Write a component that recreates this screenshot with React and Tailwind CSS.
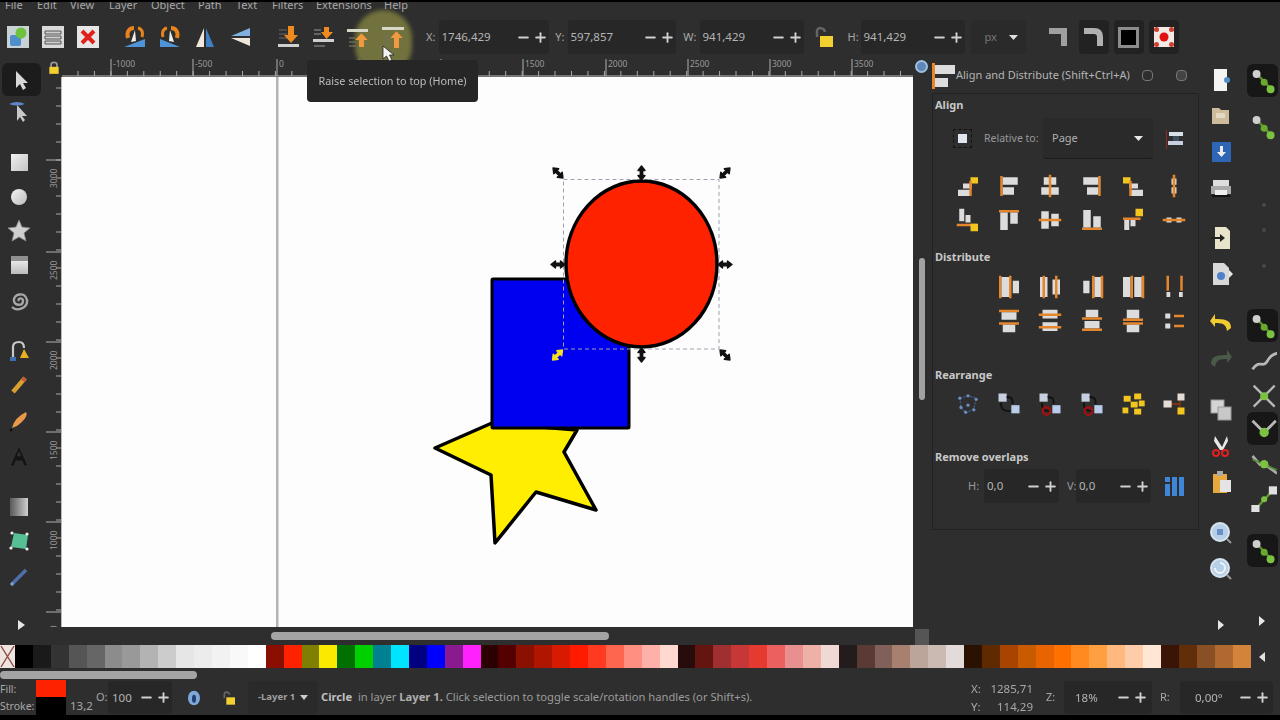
import React from 'react';
import { Minus, Plus } from 'lucide-react';

const O = '#e5862d';
const W = '#dcdcdc';
const Y = '#f2c61f';
const G = '#7cc242';

const menus = [['File', 32], ['Edit', 33], ['View', 39], ['Layer', 42], ['Object', 47], ['Path', 38], ['Text', 36], ['Filters', 44], ['Extensions', 68], ['Help', 40]];

const palette = [
  '#000000', '#1a1a1a', '#333333', '#555555', '#666666', '#8c8c8c', '#999999', '#b3b3b3', '#cccccc', '#e6e6e6', '#ececec', '#f2f2f2', '#f9f9f9', '#ffffff',
  '#8a0f00', '#ff2200', '#808000', '#fbe900', '#007000', '#00d000', '#008090', '#00e5ff', '#000080', '#0000ff', '#8a1a90', '#ff22ff',
  '#2b0000', '#550000', '#8a1000', '#b01500', '#d81a00', '#ff1a00', '#ff3a20', '#ff6650', '#ff8f80', '#ffb0a8', '#ffd8d0',
  '#280b0b', '#651510', '#a03030', '#c83737', '#e6392f', '#ec6060', '#e89090', '#efb0a8', '#f0d8d4',
  '#241c1c', '#5a3a35', '#806058', '#a88070', '#bba59a', '#cbbab2', '#e3dbdb',
  '#2b1100', '#602a00', '#a84400', '#c85a00', '#e86400', '#ff7000', '#ff8a20', '#ffa040', '#ffb880', '#ffccaa', '#ffe6d5',
  '#3a1505', '#602f0a', '#8a5025', '#b06a30', '#d4833a',
];

// icon made of plain blocks, each [x, y, w, h, colour]
function Blocks({ items, s = 24 }) {
  return (
    <svg width={s} height={s} viewBox="0 0 24 24" className="shrink-0">
      {items.map((r, i) => (
        <rect key={i} x={r[0]} y={r[1]} width={r[2]} height={r[3]} fill={r[4]} />
      ))}
    </svg>
  );
}

function Ico({ children, s = 24 }) {
  return (
    <svg width={s} height={s} viewBox="0 0 24 24" className="shrink-0">
      {children}
    </svg>
  );
}

const alignIcons = [
  [[14, 5, 6, 5, Y], [8, 10, 7, 4, W], [4, 15, 10, 5, W], [13, 8, 2, 12, O]],
  [[5, 4, 2, 16, O], [7, 5, 12, 6, W], [7, 13, 9, 6, W]],
  [[7, 5, 10, 6, W], [5, 13, 14, 6, W], [11, 3, 2, 18, O]],
  [[17, 4, 2, 16, O], [5, 5, 12, 6, W], [8, 13, 9, 6, W]],
  [[4, 5, 6, 5, Y], [9, 10, 7, 4, W], [10, 15, 10, 5, W], [9, 8, 2, 12, O]],
  [[10, 6, 4, 5, W], [10, 13, 4, 5, W], [11, 3, 2, 18, O]],
  [[5, 3, 4, 10, W], [10, 8, 4, 6, W], [3, 15, 16, 2, O], [14, 15, 6, 6, Y]],
  [[4, 4, 16, 2, O], [5, 6, 6, 14, W], [13, 6, 6, 9, W]],
  [[5, 5, 6, 14, W], [13, 7, 6, 10, W], [3, 11, 18, 2, O]],
  [[4, 18, 16, 2, O], [5, 4, 6, 14, W], [13, 9, 6, 9, W]],
  [[14, 3, 6, 6, Y], [4, 10, 14, 2, O], [5, 12, 4, 8, W], [10, 12, 4, 5, W]],
  [[6, 10, 4, 4, W], [14, 10, 4, 4, W], [3, 11, 18, 2, O]],
];

const distIcons = [
  [[4, 3, 2, 18, O], [6, 4, 6, 16, W], [12, 3, 2, 18, O], [15, 7, 5, 10, W]],
  [[4, 4, 6, 16, W], [14, 6, 6, 12, W], [6, 3, 2, 18, O], [16, 3, 2, 18, O]],
  [[5, 7, 5, 10, W], [12, 3, 2, 18, O], [14, 4, 6, 16, W], [19, 3, 2, 18, O]],
  [[4, 4, 6, 16, W], [10, 3, 2, 18, O], [13, 4, 6, 16, W], [19, 3, 2, 18, O]],
  [[6, 3, 2, 12, O], [6, 16, 3, 4, W], [17, 3, 2, 12, O], [16, 16, 3, 4, W]],
  [[4, 3, 16, 2, O], [6, 5, 12, 6, W], [4, 13, 16, 2, O], [7, 15, 10, 6, W]],
  [[6, 3, 12, 7, W], [3, 6, 18, 2, O], [6, 13, 12, 7, W], [3, 16, 18, 2, O]],
  [[7, 3, 10, 6, W], [4, 9, 16, 2, O], [6, 12, 12, 6, W], [4, 18, 16, 2, O]],
  [[7, 3, 10, 7, W], [4, 10, 16, 2, O], [4, 13, 16, 2, O], [7, 15, 10, 6, W]],
  [[5, 6, 4, 4, W], [12, 7, 8, 2, O], [5, 14, 4, 4, W], [12, 15, 8, 2, O]],
];

function SwapIcon({ red }) {
  return (
    <Ico s={28}>
      <rect x="3" y="3" width="7" height="7" fill="#c6d0e0" />
      <rect x="14" y="13" width="7" height="7" fill="#b9cdea" />
      <path d="M10 6 C16 6 15 10 15 12 M5 11 C5 18 9 18 13 18" stroke="#111" strokeWidth="1.6" fill="none" />
      {red && <circle cx="9" cy="18" r="3.2" fill="none" stroke="#a01010" strokeWidth="2" />}
    </Ico>
  );
}

const rearrangeIcons = [
  <Ico key="a" s={28}>
    <path d="M5 7 L12 5 L19 7 L17 16 L10 20 L6 15 Z" fill="none" stroke="#3f5f8f" strokeWidth="1" strokeDasharray="2 1" />
    {[[5, 7], [12, 5], [19, 8], [17, 17], [10, 19], [6, 15], [12, 13]].map((p, i) => (
      <circle key={i} cx={p[0]} cy={p[1]} r="1.4" fill="#6c8cc0" />
    ))}
  </Ico>,
  <SwapIcon key="b" />,
  <SwapIcon key="c" red />,
  <SwapIcon key="d" red />,
  <Blocks key="e" s={28} items={[[4, 5, 6, 5, Y], [13, 3, 6, 5, Y], [10, 10, 6, 5, Y], [17, 9, 5, 5, Y], [3, 15, 5, 5, Y], [13, 16, 6, 5, Y]]} />,
  <Ico key="f" s={28}>
    <path d="M8 12 H17 M17 6 V18" stroke="#7a3410" strokeWidth="1.6" />
    <rect x="3" y="9" width="7" height="6" fill="#e6dcd6" />
    <rect x="15" y="3" width="6" height="6" fill="#e6dcd6" />
    <rect x="15" y="15" width="6" height="6" fill={Y} />
  </Ico>,
];

function SnapDots() {
  return (
    <Ico s={28}>
      <path d="M6 5 L19 19" stroke="#5f8a2c" strokeWidth="2" />
      <circle cx="6.5" cy="6" r="3.4" fill="#cfcfcf" />
      <circle cx="13" cy="13" r="3" fill="#6aa92f" />
      <circle cx="18.5" cy="19" r="3.4" fill={G} />
    </Ico>
  );
}

const snapOther = {
  curve: (
    <Ico s={28}>
      <path d="M3 20 C9 11 12 19 15 14 S20 7 25 6" fill="none" stroke="#b8b8b8" strokeWidth="2.4" />
    </Ico>
  ),
  cross: (
    <Ico s={28}>
      <path d="M4 4 L22 22 M22 4 L4 22" stroke="#b8b8b8" strokeWidth="2" />
      <circle cx="13" cy="13" r="3.4" fill={G} />
    </Ico>
  ),
  vee: (
    <Ico s={28}>
      <path d="M3 5 L13 15 L23 5" stroke="#b8b8b8" strokeWidth="2.4" fill="none" />
      <circle cx="13" cy="15" r="4" fill={G} />
    </Ico>
  ),
  mid: (
    <Ico s={28}>
      <path d="M3 6 L10 14 M15 14 L24 21" stroke="#aaa" strokeWidth="2.4" />
      <path d="M3 9 L24 18" stroke="#4f8a2c" strokeWidth="1.5" />
      <circle cx="13" cy="13" r="3.6" fill={G} />
    </Ico>
  ),
  nodes: (
    <Ico s={28}>
      <path d="M6 21 L20 6" stroke="#5f9a2c" strokeWidth="2" />
      <rect x="2" y="18" width="7" height="7" fill="#e0e0e0" />
      <rect x="17" y="2" width="7" height="7" fill="#e0e0e0" />
      <circle cx="13" cy="13" r="2.6" fill={G} />
    </Ico>
  ),
};

const topIcons = {
  group: (
    <Ico>
      <rect x="1" y="1" width="22" height="22" fill="#c9d2d4" />
      <rect x="4" y="10" width="11" height="11" rx="2" fill="#4f90cc" />
      <circle cx="15" cy="8" r="5.5" fill="#6fc23e" />
    </Ico>
  ),
  layers: (
    <Ico>
      <rect x="1" y="1" width="22" height="22" fill="#dadada" />
      <path d="M4 6 H20 V9 H4 Z M4 11 H20 V14 H4 Z M4 16 H20 V19 H4 Z" fill="#cfcfcf" stroke="#555" strokeWidth="1" />
    </Ico>
  ),
  remove: (
    <Ico>
      <rect x="1" y="1" width="22" height="22" fill="#e6e6e6" />
      <path d="M6 6 L18 18 M18 6 L6 18" stroke="#e0201a" strokeWidth="4" />
    </Ico>
  ),
  rotL: (
    <Ico>
      <path d="M1 22 L22 14 L22 22 Z" fill="#4f93d8" />
      <path d="M12 5 L13 16 L8 17 Z" fill="#eee" />
      <path d="M5 13 C3 6 7 3 11 3" stroke="#e8841e" strokeWidth="4" fill="none" />
      <path d="M15 3 C20 4 20 9 19 12" stroke="#e8841e" strokeWidth="3" fill="none" />
    </Ico>
  ),
  rotR: (
    <Ico>
      <path d="M2 14 L22 22 L2 22 Z" fill="#4f93d8" />
      <path d="M12 5 L11 16 L16 17 Z" fill="#eee" />
      <path d="M19 13 C21 6 17 3 13 3" stroke="#e8841e" strokeWidth="4" fill="none" />
      <path d="M9 3 C4 4 4 9 5 12" stroke="#e8841e" strokeWidth="3" fill="none" />
    </Ico>
  ),
  flipH: (
    <Ico>
      <path d="M11 3 L11 22 L3 22 Z" fill="#f0e8df" />
      <path d="M13 3 L13 22 L21 22 Z" fill="#3f7fc4" />
    </Ico>
  ),
  flipV: (
    <Ico>
      <path d="M3 11 L22 11 L22 3 Z" fill="#7fb0e0" />
      <path d="M3 13 L22 13 L22 21 Z" fill="#efe6da" />
    </Ico>
  ),
  lowerBottom: (
    <Ico>
      <path d="M3 5 H11 M3 9 H11 M3 13 H11" stroke="#555" strokeWidth="1.5" />
      <rect x="2" y="19" width="21" height="3" fill="#cfcfcf" />
      <path d="M12 1 H18 V10 H22 L15 18 L8 10 H12 Z" fill="#ee8a20" />
    </Ico>
  ),
  lower: (
    <Ico>
      <path d="M3 5 H10 M3 9 H10 M3 21 H14" stroke="#777" strokeWidth="1.5" />
      <rect x="2" y="14" width="21" height="3" fill="#cfcfcf" />
      <path d="M13 2 H18 V7 H22 L15.5 14 L10 7 H13 Z" fill="#ee8a20" />
    </Ico>
  ),
  raise: (
    <Ico>
      <rect x="1" y="4" width="21" height="3" fill="#d8d8c8" />
      <path d="M3 13 H10 M3 17 H10 M3 21 H10" stroke="#6a6a5a" strokeWidth="1.5" />
      <path d="M13 22 H18 V15 H22 L15.5 8 L9 15 H13 Z" fill="#ee9a20" />
    </Ico>
  ),
  top: (
    <Ico>
      <rect x="1" y="2" width="22" height="3" fill="#d8d8c8" />
      <path d="M3 11 H9 M3 15 H9 M3 19 H9" stroke="#6a6a5a" strokeWidth="1.5" />
      <path d="M13 23 H18 V13 H22 L15.5 6 L9 13 H13 Z" fill="#ee9a20" />
    </Ico>
  ),
};

const Lock = ({ s = 24 }) => (
  <Ico s={s}>
    <path d="M5 12 V6 C5 2 12 2 13 7" stroke="#666" strokeWidth="2.5" fill="none" />
    <rect x="8" y="11" width="13" height="11" fill="#f2d030" />
  </Ico>
);

function Spin({ value, w, pl = 'pl-[3px]', pr = 'pr-[1px]', h = 'h-[34px]' }) {
  return (
    <div className={`flex items-center ${h} ${pl} ${pr} shrink-0 rounded bg-[#272727] ${w}`}>
      <span className="text-[11.5px] text-[#b5b5b5]">{value}</span>
      <div className="ml-auto flex items-center gap-[2px] text-[#d0d0d0]">
        <Minus size={15} strokeWidth={3} />
        <Plus size={15} strokeWidth={3} />
      </div>
    </div>
  );
}

function Slot({ children, w = 'w-[35px]' }) {
  return <div className={`flex shrink-0 items-center justify-center ${w}`}>{children}</div>;
}

function Label({ children, w }) {
  return <span className={`shrink-0 pr-[3px] text-right text-[11px] text-[#a8a8a8] ${w}`}>{children}</span>;
}

function TopBar() {
  return (
    <div className="flex h-[46px] shrink-0 items-center pt-[4px] pl-[0.5px]">
      <Slot>{topIcons.group}</Slot>
      <Slot>{topIcons.layers}</Slot>
      <Slot>{topIcons.remove}</Slot>
      <div className="ml-[12px] flex">
        <Slot>{topIcons.rotL}</Slot>
        <Slot>{topIcons.rotR}</Slot>
        <Slot>{topIcons.flipH}</Slot>
        <Slot>{topIcons.flipV}</Slot>
      </div>
      <div className="ml-[13px] flex">
        <Slot>{topIcons.lowerBottom}</Slot>
        <Slot>{topIcons.lower}</Slot>
        <Slot>{topIcons.raise}</Slot>
        <Slot>{topIcons.top}</Slot>
      </div>
      <Label w="w-[28px]">X:</Label>
      <Spin value="1746,429" w="w-[110px]" />
      <Label w="w-[19px]">Y:</Label>
      <Spin value="597,857" w="w-[108px]" />
      <Label w="w-[24px]">W:</Label>
      <Spin value="941,429" w="w-[104px]" />
      <Slot w="w-[44px]"><div className="-ml-[4px]"><Lock /></div></Slot>
      <Label w="w-[13px]">H:</Label>
      <Spin value="941,429" w="w-[104px]" />
      <div className="ml-[6px] flex h-[34px] w-[55px] shrink-0 items-center rounded bg-[#2a2a2a] pl-[14px]">
        <span className="text-[11px] text-[#777]">px</span>
        <svg width="9" height="5" viewBox="0 0 9 5" className="ml-[12px]"><path d="M0 0 H9 L4.5 5 Z" fill="#ddd" /></svg>
      </div>
      <div className="ml-[18px] flex items-center gap-[5px]">
        <Slot w="w-[30px]">
          <Ico><path d="M2 6 H17 V21" fill="none" stroke="#a0a0a0" strokeWidth="6" /></Ico>
        </Slot>
        <div className="flex h-[34px] w-[30px] items-center justify-center rounded bg-[#222]">
          <Ico><path d="M2 6 H12 Q18 6 18 12 V21" fill="none" stroke="#b0b0b0" strokeWidth="6" /></Ico>
        </div>
        <div className="flex h-[34px] w-[30px] items-center justify-center rounded bg-[#222]">
          <div className="h-[21px] w-[21px] border-[3px] border-[#8c8c8c] bg-black" />
        </div>
        <div className="flex h-[34px] w-[30px] items-center justify-center rounded bg-[#222]">
          <Ico>
            <rect x="2" y="2" width="20" height="20" fill="#f2e8e4" />
            <circle cx="12" cy="12" r="4.5" fill="#e01010" />
            <circle cx="4.5" cy="4.5" r="2.5" fill="#d04030" />
            <circle cx="19.5" cy="4.5" r="2.5" fill="#d04030" />
            <circle cx="4.5" cy="19.5" r="2.5" fill="#d04030" />
            <circle cx="19.5" cy="19.5" r="2.5" fill="#d04030" />
          </Ico>
        </div>
      </div>
    </div>
  );
}

function ToolBox() {
  return (
    <div className="flex w-[38px] shrink-0 flex-col items-center">
      <div className="mt-[5px] ml-[4px] flex h-[33px] w-[39px] shrink-0 items-center justify-center rounded-md bg-[#1c1c1c]">
        <Ico><path d="M7 3 L7 20 L11 16 L14 22 L17 20 L14 15 L19 15 Z" fill="#d8d8d8" /></Ico>
      </div>
      <div className="-mt-[2px] flex h-[34px] items-center">
        <Ico>
          <path d="M2 5 Q10 1 18 5 Q10 8 2 5 Z" fill="#5f86c8" />
          <path d="M10 6 L10 22 L13 18 L16 23 L18 21 L15 17 L20 17 Z" fill="#c8c8c8" />
        </Ico>
      </div>
      <div className="mt-[17px] flex h-[34px] items-center">
        <div className="h-[17px] w-[17px] bg-gradient-to-br from-[#f0f0f0] to-[#c4c4c4]" />
      </div>
      <div className="flex h-[35px] items-center">
        <div className="h-[16px] w-[16px] rounded-full bg-gradient-to-br from-[#f4f4f4] to-[#bcbcbc]" />
      </div>
      <div className="flex h-[34px] items-center">
        <Ico><path d="M12 1 L15 8 L23 9 L17 14 L19 22 L12 18 L5 22 L7 14 L1 9 L9 8 Z" fill="#cfcfcf" stroke="#888" strokeWidth="0.8" /></Ico>
      </div>
      <div className="flex h-[34px] flex-col items-center justify-center">
        <div className="h-[5px] w-[17px] bg-[#8f8f8f]" />
        <div className="h-[13px] w-[17px] bg-gradient-to-b from-[#e8e8e8] to-[#bbb]" />
      </div>
      <div className="flex h-[36px] items-center">
        <Ico><path d="M12 13 C10 10 16 9 16 13 C16 18 8 18 7 13 C6 6 18 3 20 12 C21 20 10 24 5 19" fill="none" stroke="#a8a8a8" strokeWidth="2.4" /></Ico>
      </div>
      <div className="mt-[15px] flex h-[34px] items-center">
        <Ico>
          <path d="M6 22 V9 Q6 4 12 4 Q17 4 17 10" fill="none" stroke="#c8c8c8" strokeWidth="2.2" />
          <path d="M17 11 L22 20 H13 Z" fill="#e8b020" />
          <rect x="3" y="19" width="6" height="4" fill="#3f6fb0" />
        </Ico>
      </div>
      <div className="flex h-[35px] items-center">
        <Ico><path d="M6 19 L18 5" stroke="#d8a030" strokeWidth="4.5" /><path d="M16 8 L18 5" stroke="#c05a3a" strokeWidth="4.5" /></Ico>
      </div>
      <div className="flex h-[35px] items-center">
        <Ico><path d="M5 20 Q7 10 19 4 Q22 9 10 18 Z" fill="#e89a4a" /><circle cx="4" cy="22" r="1.5" fill="#111" /></Ico>
      </div>
      <div className="flex h-[37px] items-center">
        <Ico>
          <path d="M12 2 L21 22 H17 L15 17 H9 L7 22 H3 Z M10.5 12 H13.5 L12 8 Z" fill="#151515" stroke="#3a3a3a" strokeWidth="0.6" />
        </Ico>
      </div>
      <div className="mt-[16px] flex h-[34px] items-center">
        <div className="h-[18px] w-[18px] bg-gradient-to-r from-[#5a5a5a] to-[#d0d0d0]" />
      </div>
      <div className="flex h-[34px] items-center">
        <Ico>
          <path d="M7 4 L21 6 L19 20 L4 18 Z" fill="#56bf94" />
          <circle cx="5" cy="4" r="1.6" fill="#eee" />
          <circle cx="20" cy="5" r="1.6" fill="#eee" />
          <circle cx="4" cy="19" r="1.6" fill="#eee" />
          <circle cx="20" cy="20" r="1.6" fill="#eee" />
        </Ico>
      </div>
      <div className="flex h-[36px] items-center">
        <Ico><path d="M5 20 L19 6" stroke="#4f6fa8" strokeWidth="3.5" /><circle cx="5" cy="20" r="1.8" fill="#7f9fd0" /></Ico>
      </div>
      <svg width="7" height="10" viewBox="0 0 7 10" className="mt-[26px] ml-[4px]"><path d="M0 0 L7 5 L0 10 Z" fill="#e8e8e8" /></svg>
    </div>
  );
}

function TopRuler() {
  const major = [[111, '-1000'], [193, '-500'], [277, '0'], [359, '500'], [441, '1000'], [523, '1500'], [606, '2000'], [688, '2500'], [770, '3000'], [852, '3500']];
  const minor = [];
  for (let x = 62; x < 913; x += 16.45) minor.push(x);
  return (
    <svg width="851" height="19" viewBox="62 58 851 19" className="block shrink-0">
      {minor.map((x) => (
        <line key={x} x1={x + 16} x2={x + 16} y1="71" y2="76" stroke="#a8a8a8" strokeWidth="1" />
      ))}
      <line x1="62" x2="913" y1="76" y2="76" stroke="#bbb" strokeWidth="1" />
      {major.map(([x, t]) => (
        <g key={x}>
          <line x1={x} x2={x} y1="59" y2="76" stroke="#b0b0b0" strokeWidth="1" />
          <text x={x + 2} y="67" fontSize="8.5" fill="#999">{t}</text>
        </g>
      ))}
    </svg>
  );
}

function SideRuler() {
  const major = [[160, '3000'], [252, '2500'], [342, '2000'], [432, '1500'], [522, '1000'], [612, '500']];
  const minor = [];
  for (let y = 88; y < 627; y += 18) minor.push(y);
  return (
    <svg width="24" height="550" viewBox="38 77 24 550" className="block shrink-0">
      {minor.map((y) => (
        <line key={y} x1="56" x2="62" y1={y} y2={y} stroke="#a8a8a8" strokeWidth="1" />
      ))}
      <line x1="61.5" x2="61.5" y1="77" y2="627" stroke="#bbb" strokeWidth="1" />
      {major.map(([y, t]) => (
        <g key={y}>
          <line x1="46" x2="62" y1={y} y2={y} stroke="#b0b0b0" strokeWidth="1" />
          <text transform={`translate(57 ${y + 28}) rotate(-90)`} fontSize="8.5" fill="#999">{t}</text>
        </g>
      ))}
    </svg>
  );
}

function ArrowHandle({ x, y, rot, fill = '#111' }) {
  return (
    <path
      transform={`translate(${x} ${y}) rotate(${rot})`}
      d="M-7 0 L-2.5 -3.5 L-2.5 -1.2 L2.5 -1.2 L2.5 -3.5 L7 0 L2.5 3.5 L2.5 1.2 L-2.5 1.2 L-2.5 3.5 Z"
      fill={fill}
      stroke={fill}
      strokeWidth="1.4"
      strokeLinejoin="round"
    />
  );
}

function CanvasDrawing() {
  return (
    <svg width="851" height="550" viewBox="62 77 851 550" className="block shrink-0 bg-[#fdfdfd]">
      <rect x="276" y="77" width="2.5" height="550" fill="#b4b4b4" />
      <path
        d="M435 448 L492 423 L577 430 L564 452 L596 510 L536 492 L495 543 L491 475 Z"
        fill="#ffee00"
        stroke="#000"
        strokeWidth="3.5"
        strokeLinejoin="round"
      />
      <rect x="492" y="279" width="137" height="149" rx="1" fill="#0000f0" stroke="#000" strokeWidth="3" />
      <ellipse cx="641.5" cy="264" rx="75.5" ry="83" fill="#ff2200" stroke="#000" strokeWidth="3.5" />
      <rect x="563.5" y="179.5" width="155.5" height="169.5" fill="none" stroke="#a0a0b0" strokeWidth="1" strokeDasharray="4 3" />
      <ArrowHandle x={558} y={173} rot={45} />
      <ArrowHandle x={641.5} y={173} rot={90} />
      <ArrowHandle x={725} y={173} rot={-45} />
      <ArrowHandle x={558} y={264.5} rot={0} />
      <ArrowHandle x={725} y={264.5} rot={0} />
      <ArrowHandle x={557.5} y={355} rot={-45} fill="#f5e020" />
      <ArrowHandle x={641.5} y={355} rot={90} />
      <ArrowHandle x={725} y={355} rot={45} />
    </svg>
  );
}

function Palette() {
  return (
    <div className="flex h-[23px] shrink-0">
      <div className="h-full w-[15px] shrink-0 bg-[#f0e4e0]">
        <svg width="15" height="23" viewBox="0 0 15 23" className="block">
          <path d="M1 1 L14 22 M14 1 L1 22" stroke="#8a4a40" strokeWidth="1.4" />
        </svg>
      </div>
      <div className="flex w-[1235px] shrink-0">
        {palette.map((c, i) => (
          <div key={i} className="h-full flex-1" style={{ backgroundColor: c }} />
        ))}
      </div>
      <svg width="6" height="10" viewBox="0 0 6 10" className="mt-[7px] ml-[9px]"><path d="M6 0 L0 5 L6 10 Z" fill="#e0e0e0" /></svg>
    </div>
  );
}

function AlignPanel() {
  const head = 'text-[11px] font-bold leading-[16px] text-[#c8c8c8]';
  return (
    <div className="flex w-[270px] shrink-0 flex-col pl-[2px]">
      <div className="flex h-[35px] shrink-0 items-center">
        <svg width="24" height="26" viewBox="0 0 24 26" className="shrink-0">
          <rect x="0" y="0" width="3" height="26" fill={O} />
          <rect x="3" y="2" width="20" height="9" fill="#ddd" />
          <rect x="3" y="15" width="13" height="9" fill="#ddd" />
        </svg>
        <span className="w-[145px] shrink-0 text-[11px] whitespace-nowrap text-[#b4b4b4]">Align and Distribute (Shift+Ctrl+A)</span>
        <div className="ml-[41px] h-[11px] w-[11px] rounded-sm border border-[#777]" />
        <div className="ml-[23px] h-[11px] w-[11px] rounded-sm border border-[#777] bg-[#444]" />
      </div>
      <div className="flex h-[437px] w-[267px] shrink-0 flex-col border border-[#222] pl-[2px]">
        <div className={`${head} mt-[3px]`}>Align</div>
        <div className="mt-[5px] flex h-[41px] items-center">
          <div className="ml-[18px] flex h-[19px] w-[19px] shrink-0 items-center justify-center border border-dashed border-[#111]">
            <div className="h-[9px] w-[9px] bg-[#dfe6f0]" />
          </div>
          <span className="ml-[12px] w-[54px] shrink-0 text-[10.5px] whitespace-nowrap text-[#999]">Relative to:</span>
          <div className="ml-[5px] flex h-[41px] w-[110px] shrink-0 items-center rounded border-b border-[#1c1c1c] bg-[#2a2a2a] pl-[9px]">
            <span className="w-[26px] text-[11px] text-[#b0b0b0]">Page</span>
            <svg width="9" height="5" viewBox="0 0 9 5" className="ml-[56px]"><path d="M0 0 H9 L4.5 5 Z" fill="#e8e8e8" /></svg>
          </div>
          <div className="ml-[10px]">
            <Blocks items={[[6, 5, 14, 4, '#d8e0ea'], [10, 9, 6, 5, '#3f4f60'], [5, 14, 15, 4, '#c8d0e0'], [3, 3, 1, 19, '#8a2a20']]} />
          </div>
        </div>
        <div className="mt-[10px] ml-[12px] grid w-[248px] grid-cols-6">
          {alignIcons.map((items, i) => (
            <div key={i} className="flex h-[34px] items-center justify-center"><Blocks items={items} s={30} /></div>
          ))}
        </div>
        <div className={`${head} mt-[12px]`}>Distribute</div>
        <div className="mt-[5px] ml-[12px] grid w-[248px] grid-cols-6">
          {distIcons.map((items, i) => (
            <div key={i} className={`flex h-[34px] items-center justify-center ${i === 0 || i === 5 ? 'col-start-2' : ''}`}><Blocks items={items} s={30} /></div>
          ))}
        </div>
        <div className={`${head} mt-[29px]`}>Rearrange</div>
        <div className="mt-[4px] ml-[12px] grid w-[248px] grid-cols-6">
          {rearrangeIcons.map((icon, i) => (
            <div key={i} className="flex h-[34px] items-center justify-center">{icon}</div>
          ))}
        </div>
        <div className={`${head} mt-[28px]`}>Remove overlaps</div>
        <div className="mt-[4px] flex h-[34px] items-center">
          <span className="ml-[33px] w-[16px] text-[11px] text-[#999]">H:</span>
          <Spin value="0,0" w="w-[75px]" />
          <span className="ml-[8px] w-[9px] text-[11px] text-[#999]">V:</span>
          <Spin value="0,0" w="w-[75px]" />
          <div className="ml-[12px]">
            <Blocks items={[[2, 3, 5, 5, '#3f86d8'], [2, 10, 5, 12, '#3f86d8'], [9, 3, 5, 19, '#3f86d8'], [16, 3, 5, 19, '#3f86d8']]} />
          </div>
        </div>
      </div>
    </div>
  );
}

function CommandBar() {
  const Item = ({ children, cls = '' }) => <div className={`flex h-[36px] items-center justify-center ${cls}`}>{children}</div>;
  return (
    <div className="flex w-[41px] shrink-0 flex-col pl-[1px]">
      <Item cls="mt-[4px]">
        <Ico><path d="M5 1 H18 V23 H5 Z" fill="#f4f4f4" /><circle cx="18" cy="12" r="3" fill="#4f8fd0" /></Ico>
      </Item>
      <Item>
        <Ico><path d="M3 4 H10 L12 6 H20 V20 H3 Z" fill="#cdbb9c" /><rect x="7" y="9" width="9" height="5" fill="#e4d8c0" /></Ico>
      </Item>
      <Item>
        <Ico><rect x="3" y="2" width="19" height="20" fill="#2f65b5" /><path d="M11 6 H14 V12 H17 L12.5 17 L8 12 H11 Z" fill="#eee" /></Ico>
      </Item>
      <Item>
        <Ico><path d="M4 4 H20 V10 H4 Z" fill="#ddd" /><path d="M2 10 H22 V18 H2 Z" fill="#aaa" /><rect x="6" y="14" width="12" height="6" fill="#eee" /><rect x="3" y="19" width="18" height="2" fill="#111" /></Ico>
      </Item>
      <Item cls="mt-[14px]">
        <Ico><path d="M6 1 H17 L21 5 V23 H6 Z" fill="#e8e4cc" /><path d="M2 11 H11 V8 L16 12 L11 16 V13 H2 Z" fill="#222" /></Ico>
      </Item>
      <Item>
        <Ico><path d="M4 1 H15 L20 6 V23 H4 Z" fill="#d8d8d8" /><path d="M20 8 L24 12 L20 16 Z" fill="#e8e8e8" /><circle cx="12" cy="14" r="4" fill="#4f7fc8" /></Ico>
      </Item>
      <Item cls="mt-[13px]">
        <Ico><path d="M22 17 C22 8 14 8 6 8 V3 L1 10 L6 16 V12 C12 12 17 12 18 20 Z" fill="#f0cc30" /></Ico>
      </Item>
      <Item>
        <Ico><path d="M2 17 C2 8 10 8 18 8 V3 L23 10 L18 16 V12 C12 12 7 12 6 20 Z" fill="#4a5a48" /></Ico>
      </Item>
      <Item cls="mt-[15px]">
        <Ico><rect x="2" y="2" width="13" height="13" fill="#d4d4d4" stroke="#999" /><rect x="9" y="9" width="13" height="13" fill="#c8c8c8" stroke="#999" /></Ico>
      </Item>
      <Item>
        <Ico><path d="M6 2 L13 13 L18 2 L19 7 L14 16 H11 L5 7 Z" fill="#e8e8e8" /><circle cx="7" cy="19" r="3" fill="none" stroke="#e02020" strokeWidth="2" /><circle cx="16" cy="19" r="3" fill="none" stroke="#e02020" strokeWidth="2" /></Ico>
      </Item>
      <Item>
        <Ico><rect x="4" y="4" width="14" height="19" fill="#e8a840" /><rect x="8" y="1" width="6" height="5" fill="#aaa" /><rect x="11" y="10" width="11" height="12" fill="#e4e4e4" /></Ico>
      </Item>
      <Item cls="mt-[15px]">
        <Ico><circle cx="11" cy="11" r="9" fill="#b8cfe8" stroke="#d8e4f0" strokeWidth="2" /><rect x="8" y="8" width="6" height="6" fill="#6a90c8" /><path d="M18 18 L22 22" stroke="#999" strokeWidth="2" /></Ico>
      </Item>
      <Item>
        <Ico><circle cx="11" cy="11" r="9" fill="#b8cfe8" stroke="#d8e4f0" strokeWidth="2" /><path d="M11 6 A5 5 0 1 1 6 11" stroke="#f0f4f8" strokeWidth="2" fill="none" /><path d="M18 18 L22 22" stroke="#999" strokeWidth="2" /></Ico>
      </Item>
      <svg width="6" height="10" viewBox="0 0 6 10" className="mx-auto mt-[33px] shrink-0"><path d="M0 0 L6 5 L0 10 Z" fill="#e8e8e8" /></svg>
    </div>
  );
}

function SnapBar() {
  const On = ({ children, cls = '' }) => (
    <div className={`flex h-[33px] w-[31px] shrink-0 items-center justify-center rounded-md bg-[#171717] ${cls}`}>{children}</div>
  );
  const Off = ({ children, cls = '' }) => (
    <div className={`flex h-[35px] w-[31px] shrink-0 items-center justify-center ${cls}`}>{children}</div>
  );
  return (
    <div className="flex w-[39px] shrink-0 flex-col pl-[6px]">
      <On cls="mt-[6px]"><SnapDots /></On>
      <Off cls="mt-[12px]"><SnapDots /></Off>
      <div className="flex h-[165px] shrink-0 flex-col items-center opacity-40">
        <div className="mt-[59px] h-[4px] w-[4px] rounded-full bg-[#6a7a50]" />
        <div className="mt-[21px] h-[4px] w-[4px] rounded-full bg-[#6a7a50]" />
        <div className="mt-[32px] h-[4px] w-[4px] rounded-full bg-[#6a7a50]" />
      </div>
      <On><SnapDots /></On>
      <Off>{snapOther.curve}</Off>
      <Off>{snapOther.cross}</Off>
      <On>{snapOther.vee}</On>
      <Off>{snapOther.mid}</Off>
      <Off>{snapOther.nodes}</Off>
      <On cls="mt-[19px]"><SnapDots /></On>
      <svg width="6" height="10" viewBox="0 0 6 10" className="mt-[49px] ml-[12px] shrink-0"><path d="M0 0 L6 5 L0 10 Z" fill="#e8e8e8" /></svg>
    </div>
  );
}

function StatusBar() {
  return (
    <div className="flex h-[35px] shrink-0 items-center text-[#a8a8a8]">
      <div className="flex w-[36px] shrink-0 flex-col text-[10.5px] leading-[17px]">
        <span>Fill:</span>
        <span>Stroke:</span>
      </div>
      <div className="flex w-[30px] shrink-0 flex-col">
        <div className="h-[17px] bg-[#ff2200]" />
        <div className="h-[18px] bg-black" />
      </div>
      <span className="mt-[16px] ml-[4px] w-[26px] shrink-0 text-[11.5px]">13,2</span>
      <span className="w-[12px] shrink-0 text-[11px]">O:</span>
      <Spin value="100" w="w-[64px]" pl="pl-[4px]" h="h-[33px]" />
      <Slot w="w-[44px]">
        <Ico s={16}>
          <ellipse cx="12" cy="12" rx="9" ry="11" fill="#7fa8d8" />
          <ellipse cx="12" cy="13" rx="3" ry="6" fill="#1f3f70" />
        </Ico>
      </Slot>
      <Slot w="w-[26px]"><Lock s={16} /></Slot>
      <div className="ml-[6px] flex h-[33px] w-[70px] shrink-0 items-center rounded bg-[#2a2a2a] pl-[10px]">
        <span className="text-[9.5px] font-bold text-[#a0a0a0]">-Layer 1</span>
        <svg width="8" height="5" viewBox="0 0 8 5" className="ml-[5px]"><path d="M0 0 H8 L4 5 Z" fill="#ccc" /></svg>
      </div>
      <p className="ml-[3px] w-[650px] shrink-0 truncate text-[11.2px] text-[#9c9c9c]">
        <span className="font-bold text-[#c0c0c0]">Circle</span> &nbsp;in layer <span className="font-bold text-[#b0b0b0]">Layer 1.</span> Click selection to toggle scale/rotation handles (or Shift+s).
      </p>
      <div className="flex w-[62px] shrink-0 flex-col text-[11.5px] leading-[18px]">
        <div className="flex justify-between"><span>X:</span><span>1285,71</span></div>
        <div className="flex justify-between"><span>Y:</span><span>114,29</span></div>
      </div>
      <span className="ml-[13px] w-[18px] shrink-0 text-[11px]">Z:</span>
      <Spin value="18%" w="w-[88px]" pl="pl-[11px]" pr="pr-[4px]" h="h-[33px]" />
      <span className="ml-[8px] w-[20px] shrink-0 text-[11px]">R:</span>
      <Spin value="0,00°" w="w-[93px]" pl="pl-[15px]" pr="pr-[3px]" h="h-[33px]" />
    </div>
  );
}

export default function App() {
  return (
    <div className="relative flex h-[720px] w-[1280px] flex-col overflow-hidden bg-black font-['Noto_Sans',sans-serif]">
      <div className="mt-[2px] flex h-[713px] shrink-0 flex-col bg-[#2e2e2e] blur-[0.7px]">
        <div className="flex h-[10px] shrink-0 overflow-hidden pl-[5px]">
          {menus.map(([name, w]) => (
            <div key={name} className="-mt-[4px] shrink-0 text-[11px] leading-[14px] text-[#a8a8a8]" style={{ width: w }}>{name}</div>
          ))}
        </div>
        <TopBar />
        <div className="flex h-[587px] shrink-0">
          <ToolBox />
          <div className="flex w-[892px] shrink-0 flex-col">
            <div className="flex h-[19px] shrink-0">
              <div className="flex w-[24px] shrink-0 justify-center pt-[3px] pl-[8px]">
                <Ico s={14}><path d="M7 11 V6 C7 1 17 1 17 6 V11" stroke="#999" strokeWidth="3" fill="none" /><rect x="4" y="10" width="16" height="12" fill="#f2d030" /></Ico>
              </div>
              <TopRuler />
              <div className="flex w-[17px] shrink-0 items-start justify-center pt-[2px]">
                <div className="h-[13px] w-[13px] rounded-full border-2 border-[#9fc0e0] bg-[#5f88b8]" />
              </div>
            </div>
            <div className="flex h-[550px] shrink-0">
              <SideRuler />
              <CanvasDrawing />
              <div className="flex w-[17px] shrink-0 justify-center">
                <div className="mt-[181px] h-[142px] w-[6px] rounded-full bg-[#a2a2a2]" />
              </div>
            </div>
            <div className="flex h-[18px] shrink-0">
              <div className="mt-[5px] ml-[233px] h-[8px] w-[338px] rounded-full bg-[#a4a4a4]" />
              <div className="mt-[2px] ml-[306px] h-[16px] w-[14px] bg-[#555]" />
            </div>
          </div>
          <AlignPanel />
          <CommandBar />
          <SnapBar />
        </div>
        <Palette />
        <div className="h-[12px] shrink-0 pt-[3px]">
          <div className="h-[8px] w-[197px] rounded-full bg-[#a4a4a4]" />
        </div>
        <StatusBar />
      </div>

      {/* hover glow, tooltip and pointer sit over the toolbar */}
      <div className="absolute top-[10px] left-[355px] h-[65px] w-[57px] rounded-full bg-[#72723e] mix-blend-lighten blur-[2px]" />
      <div className="absolute top-[60px] left-[307px] flex h-[42px] w-[171px] items-center justify-center rounded bg-[#262626] blur-[0.5px]">
        <span className="text-[10.8px] text-[#bcbcbc]">Raise selection to top (Home)</span>
      </div>
      <svg width="16" height="18" viewBox="0 0 16 18" className="absolute top-[45px] left-[382px]">
        <path d="M1 1 L1 14 L4.5 11 L7 16 L10 15 L7.5 10 L12 10 Z" fill="#f4f4f4" stroke="#222" strokeWidth="0.8" />
      </svg>
    </div>
  );
}
